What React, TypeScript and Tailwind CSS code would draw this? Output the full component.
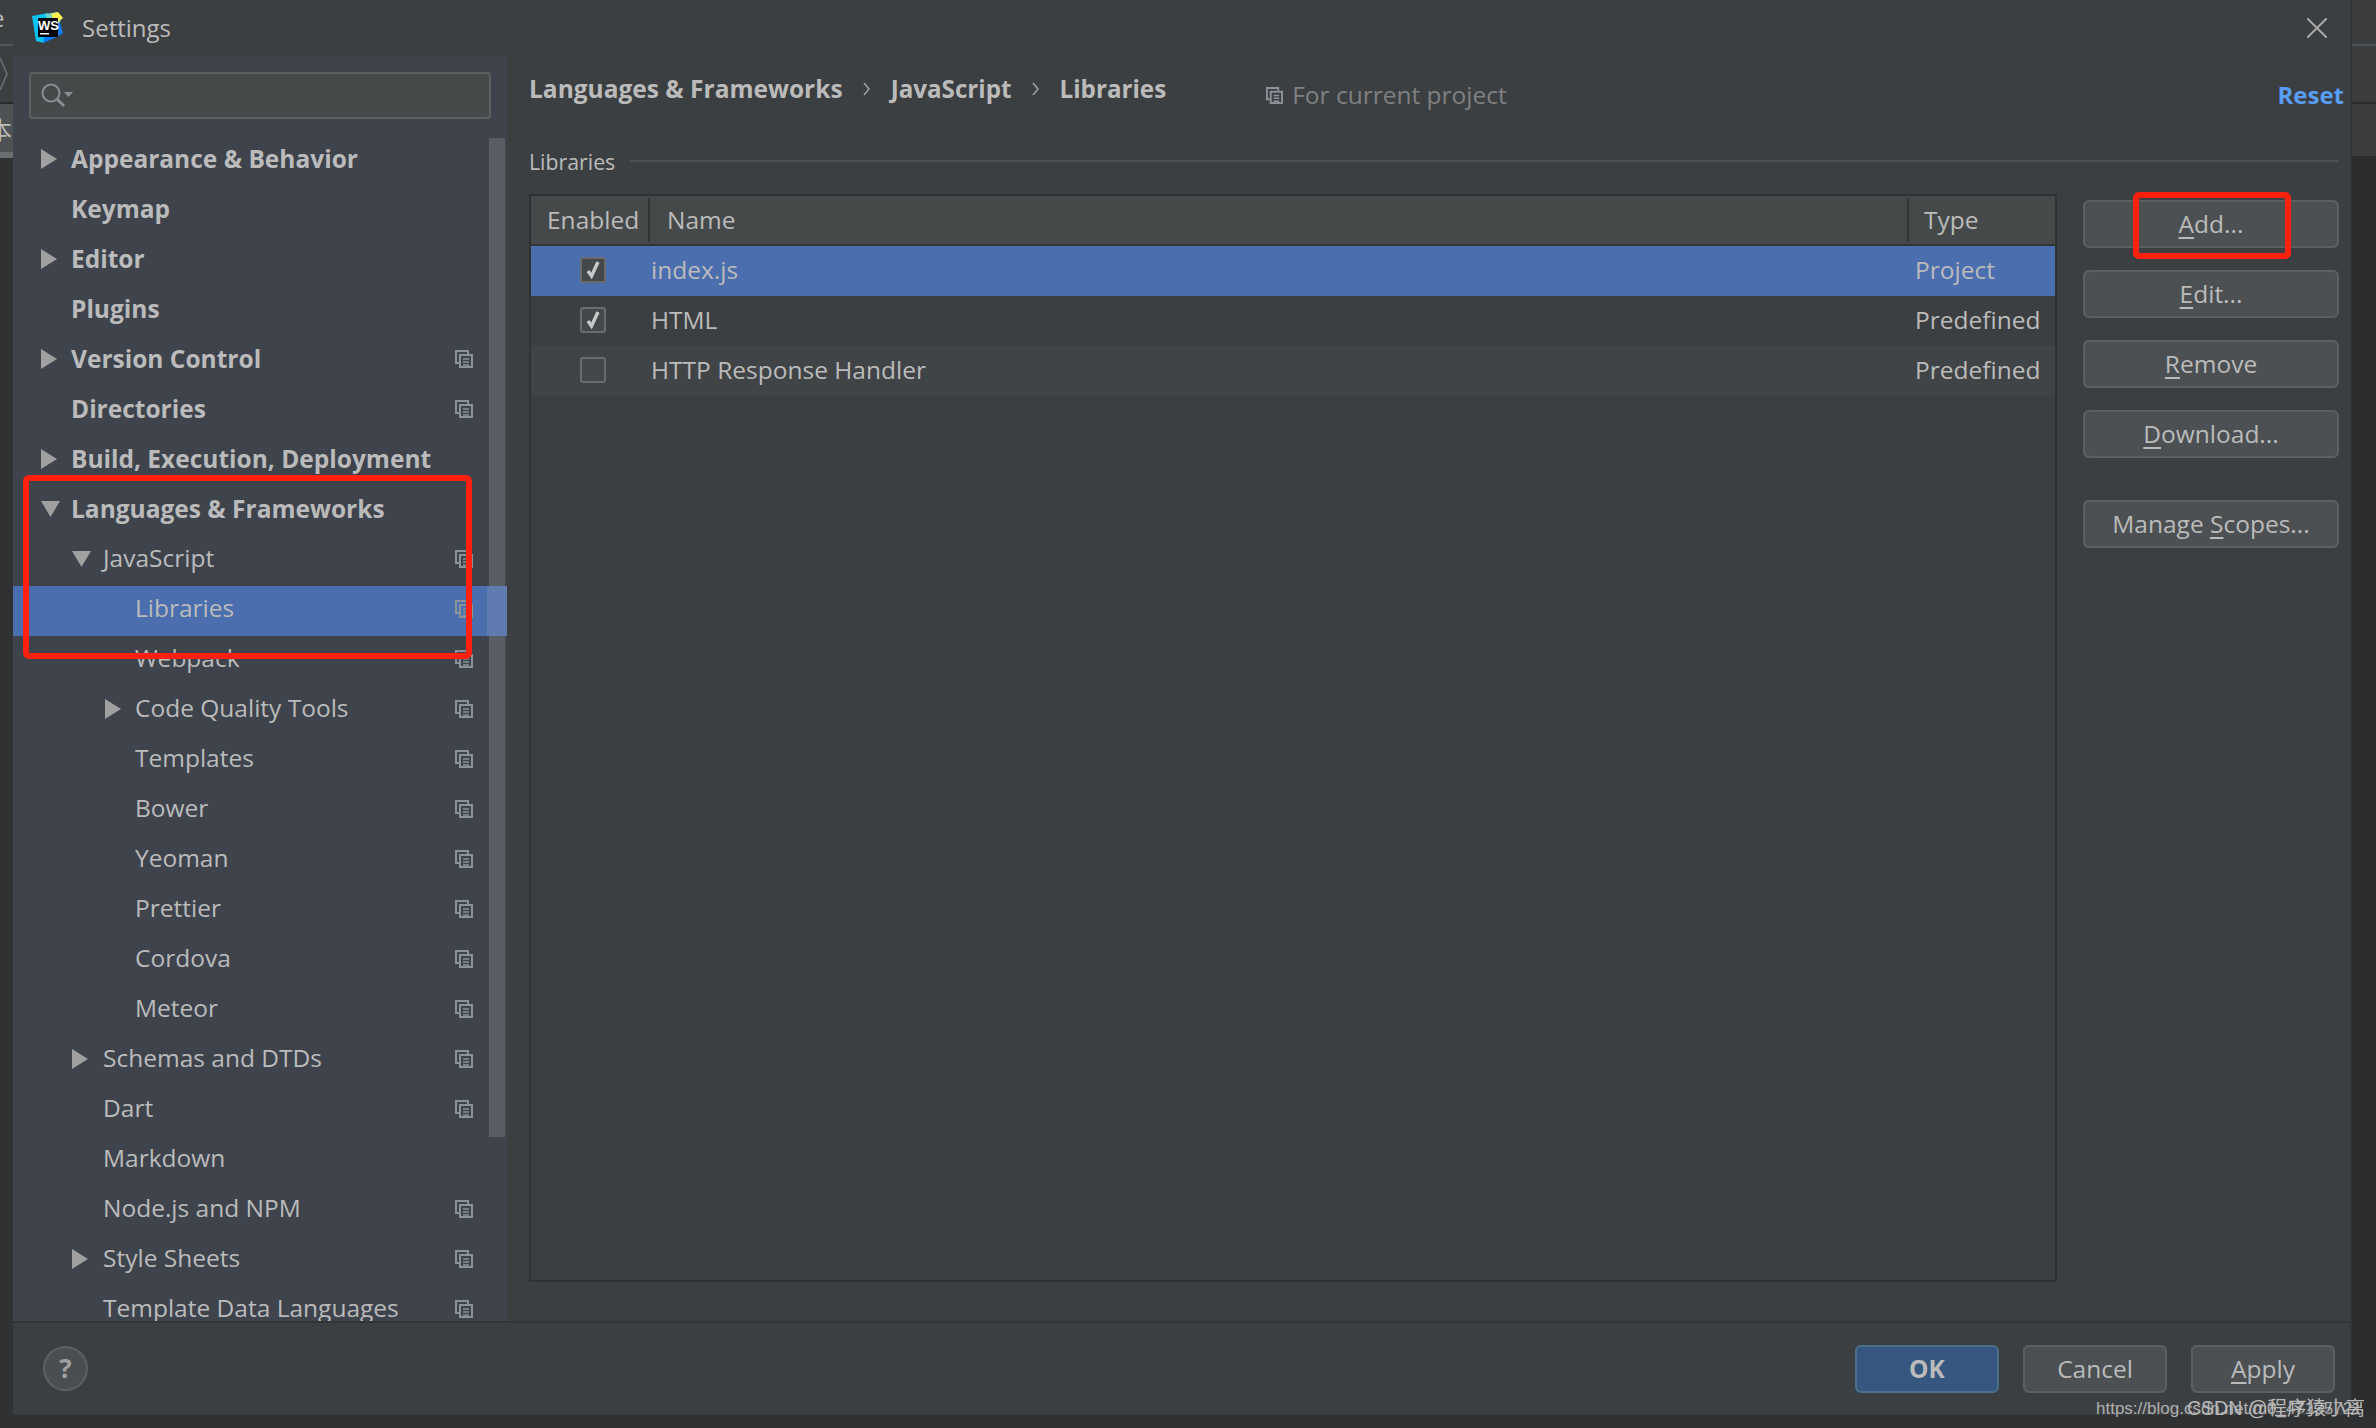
const font = { fontFamily: '"Open Sans", "Noto Sans", sans-serif' }

type Row = {
  label: string
  level: number
  arrow?: 'right' | 'down'
  copy?: boolean
  bold?: boolean
  selected?: boolean
}

const rows: Row[] = [
  { label: 'Appearance & Behavior', level: 0, arrow: 'right', bold: true },
  { label: 'Keymap', level: 0, bold: true },
  { label: 'Editor', level: 0, arrow: 'right', bold: true },
  { label: 'Plugins', level: 0, bold: true },
  { label: 'Version Control', level: 0, arrow: 'right', copy: true, bold: true },
  { label: 'Directories', level: 0, copy: true, bold: true },
  { label: 'Build, Execution, Deployment', level: 0, arrow: 'right', bold: true },
  { label: 'Languages & Frameworks', level: 0, arrow: 'down', bold: true },
  { label: 'JavaScript', level: 1, arrow: 'down', copy: true },
  { label: 'Libraries', level: 2, copy: true, selected: true },
  { label: 'Webpack', level: 2, copy: true },
  { label: 'Code Quality Tools', level: 2, arrow: 'right', copy: true },
  { label: 'Templates', level: 2, copy: true },
  { label: 'Bower', level: 2, copy: true },
  { label: 'Yeoman', level: 2, copy: true },
  { label: 'Prettier', level: 2, copy: true },
  { label: 'Cordova', level: 2, copy: true },
  { label: 'Meteor', level: 2, copy: true },
  { label: 'Schemas and DTDs', level: 1, arrow: 'right', copy: true },
  { label: 'Dart', level: 1, copy: true },
  { label: 'Markdown', level: 1 },
  { label: 'Node.js and NPM', level: 1, copy: true },
  { label: 'Style Sheets', level: 1, arrow: 'right', copy: true },
  { label: 'Template Data Languages', level: 1, copy: true },
]

const CopyIcon = ({ className = '' }: { className?: string }) => (
  <svg width="18" height="18" viewBox="0 0 18 18" fill="none" stroke="#8b9299" strokeWidth="2" className={className}>
    <path d="M4 13H1V1h12v3" />
    <rect x="5" y="5" width="12" height="12" />
    <path d="M8 9h6M8 12h6M8 15h6" strokeWidth="1.6" />
  </svg>
)

const Arrow = ({ dir }: { dir: 'right' | 'down' }) =>
  dir === 'right' ? (
    <svg width="16" height="20" viewBox="0 0 16 20"><path d="M0 0l16 10L0 20z" fill="#a0a0a0" /></svg>
  ) : (
    <svg width="19" height="16" viewBox="0 0 19 16"><path d="M0 0h19L9.500 16z" fill="#a0a0a0" /></svg>
  )

const Check = () => (
  <svg width="14" height="18" viewBox="0 0 14 18" fill="none" stroke="#c8c8c8" strokeWidth="3.400">
    <path d="M2 10l3.500 5L12 1" />
  </svg>
)

const Logo = () => (
  <svg width="34" height="34" viewBox="0 0 34 34">
    <path d="M1 5L17 2l4 6-8 24-8-2z" fill="#07c3f2" />
    <path d="M14 3l12-2 5 5-8 20z" fill="#6bd1c4" />
    <path d="M20 3l7-2 5 6-8 6z" fill="#fdf04c" />
    <path d="M12 32l14-6 6-4-3-10-14 4z" fill="#087cfa" />
    <rect x="7" y="7" width="20" height="19" fill="#000" />
    <rect x="9" y="22" width="9" height="1.500" fill="#fff" />
  </svg>
)

const Btn = ({ before = '', u, after, className = '' }: { before?: string; u: string; after: string; className?: string }) => (
  <div className={`h-[48px] w-[256px] flex items-center justify-center rounded-[6px] border-2 border-[#5e6060] bg-[#4c5052] text-[24.500px] text-[#bbbbbb] ${className}`}>
    <span>
      {before}
      <span className="underline underline-offset-[4px] decoration-2">{u}</span>
      {after}
    </span>
  </div>
)

const SideRow = ({ row }: { row: Row }) => {
  const indent = row.level === 0 ? 'pl-[58px]' : row.level === 1 ? 'pl-[90px]' : 'pl-[122px]'
  const arrowPos = row.level === 0 ? 'left-[28px]' : row.level === 1 ? 'left-[59px]' : 'left-[92px]'
  return (
    <div className={`relative h-[50px] shrink-0 flex items-center ${indent} ${row.bold ? 'pb-[4px]' : 'pb-[6px]'} ${row.selected ? 'bg-[#4b6eaf]' : ''}`}>
      {row.arrow && (
        <span className={`absolute top-0 bottom-[4px] flex items-center ${arrowPos}`}>
          <Arrow dir={row.arrow} />
        </span>
      )}
      <span className={`text-[24.500px] whitespace-nowrap text-[#bbbbbb] ${row.bold ? 'font-bold' : ''}`}>{row.label}</span>
      {row.copy && <CopyIcon className="absolute right-[34px] top-[14px]" />}
      {row.selected && <span className="absolute right-0 top-0 bottom-0 w-[20px] z-10 bg-[#5f7bb0]" />}
    </div>
  )
}

const TableRow = ({ name, type, checked, className = '' }: { name: string; type: string; checked: boolean; className?: string }) => (
  <div className={`h-[50px] flex items-center pb-[2px] text-[24.500px] text-[#bbbbbb] ${className}`}>
    <div className="w-[120px] shrink-0 flex justify-center pl-[3px]">
      <div className="w-[26px] h-[26px] rounded-[3px] border-2 border-[#6b6b6b] bg-[#43494a] flex items-center justify-center">
        {checked && <Check />}
      </div>
    </div>
    <div className="flex-1">{name}</div>
    <div className="w-[140px] shrink-0">{type}</div>
  </div>
)

export default function App() {
  return (
    <div style={font} className="relative w-[2376px] h-[1428px] overflow-hidden flex flex-col bg-[#2e3031] text-[#bbbbbb]">
      <div className="flex h-[1415px] shrink-0">
        {/* window behind, left */}
        <div className="w-[13px] shrink-0 flex flex-col bg-[#2f3133]">
          <div className="h-[44px] bg-[#3c3f41] text-[24px] leading-[36px] text-[#bbbbbb] overflow-hidden -indent-[9px]">e</div>
          <div className="h-[2px] bg-[#555555]" />
          <div className="h-[56px] bg-[#3c3f41] overflow-hidden pt-[12px]">
            <svg width="8" height="32" viewBox="0 0 8 32" fill="none" stroke="#6e7173" strokeWidth="1.500"><path d="M0 0l7 16L0 32" /></svg>
          </div>
          <div className="h-[2px] bg-[#2b2b2b]" />
          <div style={{ fontFamily: '"Noto Sans CJK SC", sans-serif' }} className="h-[48px] bg-[#4e5254] overflow-hidden text-[24px] leading-[40px] pt-[5px] text-[#bbbbbb] -indent-[12px]">本</div>
          <div className="h-[6px] bg-[#6b6e70]" />
        </div>

        <div className="w-[2337px] shrink-0 flex flex-col bg-[#3c3f41]">
          {/* title bar */}
          <div className="h-[56px] shrink-0 flex items-center pl-[18px] pr-[23px]">
            <div className="relative w-[34px] h-[34px]">
              <Logo />
              <span style={{ fontFamily: '"Liberation Sans", sans-serif' }} className="absolute left-[7px] top-[8px] text-[13px] leading-[13px] font-bold text-white">WS</span>
            </div>
            <span className="ml-[17px] text-[24px] text-[#bbbbbb]">Settings</span>
            <svg className="ml-auto" width="20" height="20" viewBox="0 0 20 20" stroke="#a8a8a8" strokeWidth="2">
              <path d="M0 0l20 20M20 0L0 20" />
            </svg>
          </div>

          <div className="flex-1 flex min-h-0">
            {/* sidebar */}
            <div className="relative w-[494px] shrink-0 flex flex-col bg-[#3e434c] overflow-hidden">
              <div className="h-[80px] shrink-0 pt-[16px] pl-[16px]">
                <div className="w-[462px] h-[47px] rounded-[4px] border-2 border-[#5e6060] bg-[#45494a] flex items-center pl-[10px]">
                  <svg width="32" height="26" viewBox="0 0 32 26" fill="none" stroke="#8a8f94" strokeWidth="2">
                    <circle cx="10" cy="10" r="8.500" />
                    <path d="M16 16l7 7" strokeWidth="3" />
                    <path d="M23 9h9l-4.500 5z" fill="#8a8f94" stroke="none" />
                  </svg>
                </div>
              </div>
              {rows.map((row) => (
                <SideRow key={row.label} row={row} />
              ))}
              <div className="absolute left-[476px] top-[82px] w-[16px] h-[999px] bg-[#5a5d63]" />
            </div>

            {/* main */}
            <div className="flex-1 min-w-0 pl-[22px] pr-[11px] flex flex-col">
              <div className="h-[78px] shrink-0 flex items-start">
                <div className="flex items-center h-[66px] text-[24.200px] font-bold text-[#bbbbbb] whitespace-nowrap">
                  <span className="text-[24.500px]">Languages &amp; Frameworks</span>
                  <svg className="mx-[20px]" width="8" height="14" viewBox="0 0 8 14" fill="none" stroke="#a0a0a0" strokeWidth="1.500"><path d="M1 1l5 6-5 6" /></svg>
                  <span>JavaScript</span>
                  <svg className="mx-[20px]" width="8" height="14" viewBox="0 0 8 14" fill="none" stroke="#a0a0a0" strokeWidth="1.500"><path d="M1 1l5 6-5 6" /></svg>
                  <span>Libraries</span>
                </div>
                <div className="ml-[100px] mt-[22px] flex items-center h-[34px] text-[24.500px] text-[#808080] whitespace-nowrap">
                  <CopyIcon className="w-[17px] h-[17px] mr-[9px]" />
                  <span>For current project</span>
                </div>
                <span className="ml-auto mr-[-5px] mt-[22px] h-[34px] leading-[34px] text-[24px] font-bold text-[#589df6]">Reset</span>
              </div>

              <div className="h-[56px] shrink-0 flex items-center">
                <span className="text-[21.300px] text-[#bbbbbb]">Libraries</span>
                <div className="flex-1 h-[2px] ml-[15px] -mt-[2px] bg-[#4d5052]" />
              </div>

              <div className="flex-1 flex gap-[26px] min-h-0">
                {/* table */}
                <div className="w-[1528px] h-[1088px] shrink-0 mt-[4px] border-2 border-[#2f3133] flex flex-col">
                  <div className="h-[50px] shrink-0 flex items-center bg-[#45494a] border-b-2 border-[#323436] text-[24.500px] text-[#bbbbbb]">
                    <div className="w-[119px] h-[44px] flex items-center pl-[16px] border-r-2 border-[#323436]">Enabled</div>
                    <div className="w-[1257px] h-[44px] flex items-center pl-[17px]">Name</div>
                    <div className="flex-1 h-[44px] flex items-center pl-[15px] border-l-2 border-[#323436]">Type</div>
                  </div>
                  <TableRow name="index.js" type="Project" checked className="bg-[#4b6eaf]" />
                  <TableRow name="HTML" type="Predefined" checked />
                  <TableRow name="HTTP Response Handler" type="Predefined" checked={false} className="bg-[#414446]" />
                </div>

                {/* side buttons */}
                <div className="flex flex-col pt-[10px]">
                  <Btn u="A" after="dd..." />
                  <Btn u="E" after="dit..." className="mt-[22px]" />
                  <Btn u="R" after="emove" className="mt-[22px]" />
                  <Btn u="D" after="ownload..." className="mt-[22px]" />
                  <Btn before="Manage " u="S" after="copes..." className="mt-[42px]" />
                </div>
              </div>
            </div>
          </div>

          {/* footer */}
          <div className="h-[94px] shrink-0 border-t-2 border-[#323436] flex items-start pl-[30px] pr-[15px] pt-[22px]">
            <div className="mt-[1px] w-[45px] h-[45px] rounded-full border-2 border-[#5e6060] bg-[#4a4e50] flex items-center justify-center text-[26px] font-bold text-[#a0a0a0]">?</div>
            <div className="ml-auto flex gap-[24px]">
              <div className="w-[144px] h-[48px] rounded-[6px] border-2 border-[#4c708c] bg-[#365880] flex items-center justify-center text-[24.500px] font-bold text-[#bbbbbb]">OK</div>
              <div className="w-[144px] h-[48px] rounded-[6px] border-2 border-[#5e6060] bg-[#4c5052] flex items-center justify-center text-[24.500px] text-[#bbbbbb]">Cancel</div>
              <div className="w-[144px] h-[48px] rounded-[6px] border-2 border-[#5e6060] bg-[#4c5052] flex items-center justify-center text-[24.500px] text-[#bbbbbb]">
                <span><span className="underline underline-offset-[4px] decoration-2">A</span>pply</span>
              </div>
            </div>
          </div>
        </div>

        {/* window behind, right */}
        <div className="flex-1 flex flex-col border-l-2 border-[#333537] bg-[#2b2d2e]">
          <div className="h-[44px] bg-[#3a3c3e]" />
          <div className="h-[2px] bg-[#4f5254]" />
          <div className="h-[56px] bg-[#3a3c3e]" />
          <div className="h-[2px] bg-[#2b2b2b]" />
          <div className="h-[52px] bg-[#3a3c3e]" />
        </div>
      </div>

      {/* annotation boxes */}
      <div className="absolute left-[23px] top-[475px] w-[449px] h-[184px] rounded-[6px] border-[6px] border-[#ff2010]" />
      <div className="absolute left-[2133px] top-[192px] w-[158px] h-[67px] rounded-[6px] border-[6px] border-[#ff2010]" />

      {/* watermarks */}
      <span style={{ fontFamily: '"Liberation Sans", sans-serif' }} className="absolute left-[2096px] top-[1399px] text-[17px] leading-[20px] whitespace-nowrap text-[#b0b0b0]">https://blog.csdn.net/m0_47135721</span>
      <span style={{ fontFamily: '"Liberation Sans", "Noto Sans CJK SC", sans-serif' }} className="absolute left-[2187px] top-[1397px] text-[19.500px] leading-[22px] whitespace-nowrap text-[#b8b8b8]">CSDN @程序猿小离</span>
    </div>
  )
}
